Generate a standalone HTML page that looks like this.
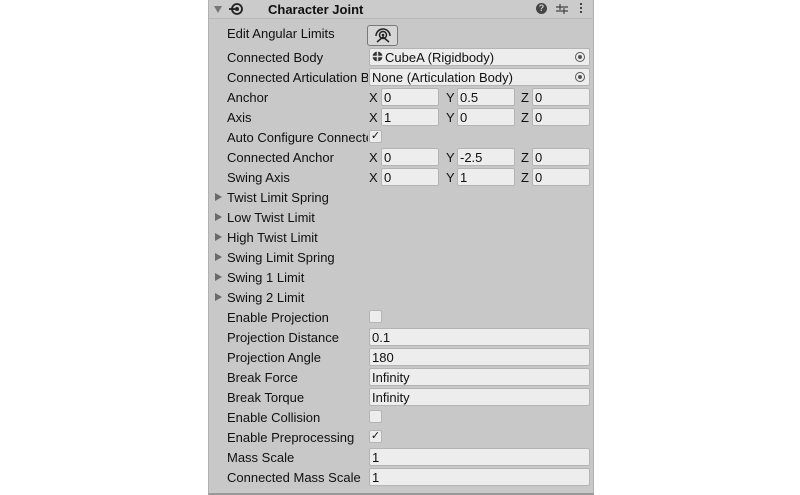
<!DOCTYPE html>
<html><head><style>
body{margin:0;width:800px;height:495px;background:#fff;position:relative;overflow:hidden;font-family:"Liberation Sans",sans-serif;font-size:13px;color:#101010}
#p{position:absolute;left:208px;top:0;width:384px;height:493px;background:#c8c8c8;border-left:1px solid #b0b0b0;border-right:1px solid #b0b0b0;border-bottom:2px solid #999}
.a{position:absolute}
.l{position:absolute;left:227px;white-space:nowrap;width:141px;overflow:hidden}
.f{position:absolute;background:#ededed;border:1px solid #b4b4b4;border-radius:2px;box-sizing:border-box;height:18px;line-height:17px;padding-left:2px;white-space:nowrap;overflow:hidden}
.x{position:absolute}
.cb{position:absolute;left:369px;width:13px;height:13px;background:#ededed;border:1px solid #b4b4b4;border-radius:2px;box-sizing:border-box;font-size:11px;line-height:11px;text-align:center}
.tri{position:absolute;left:215px;width:0;height:0;border-top:4px solid transparent;border-bottom:4px solid transparent;border-left:7px solid #6a6a6a}
.dot{position:absolute;right:4px;top:3px;width:10px;height:10px;border:1px solid #555;border-radius:50%;box-sizing:border-box}
.dot:after{content:"";position:absolute;left:2px;top:2px;width:4px;height:4px;background:#555;border-radius:50%}
</style></head><body>
<div id="p"></div>
<div class="a" style="left:209px;top:0;width:383px;height:18px;background:#cbcbcb;border-bottom:1px solid #b8b8b8"></div>
<div class="a" style="left:214px;top:6px;border-left:4px solid transparent;border-right:4px solid transparent;border-top:7px solid #777"></div>
<svg class="a" style="left:228px;top:2px" width="16" height="14" viewBox="0 0 16 14"><circle cx="9" cy="7" r="5" fill="none" stroke="#222" stroke-width="1.8"/><circle cx="9" cy="7" r="2" fill="#222"/><path d="M1 7h6" stroke="#222" stroke-width="1.8"/></svg>
<div class="a" style="left:268px;top:2px;font-weight:bold;font-size:13px">Character Joint</div>
<div class="a" style="left:536px;top:3px;width:11px;height:11px;border-radius:50%;background:#444;color:#ccc;font-size:9px;line-height:11px;text-align:center;font-weight:bold">?</div>
<svg class="a" style="left:556px;top:3px" width="12" height="12"><path d="M0 4h12M0 8h12M4 1v6M8 5v6" stroke="#444" stroke-width="1.2"/></svg>
<div class="a" style="left:580px;top:3px;width:2px;height:2px;background:#444;box-shadow:0 4px #444,0 8px #444"></div>

<div class="l" style="top:26px">Edit Angular Limits</div>
<div class="a" style="left:367px;top:25px;width:31px;height:21px;box-sizing:border-box;border:1px solid #777;border-radius:3px;background:#d6d6d6"></div>
<svg class="a" style="left:373px;top:27px" width="20" height="17" viewBox="0 0 20 17"><path d="M3 9a7 7 0 0 1 14 0" fill="none" stroke="#222" stroke-width="1.5"/><circle cx="10" cy="8" r="3.5" fill="none" stroke="#222" stroke-width="1.5"/><circle cx="10" cy="8" r="1.3" fill="#222"/><path d="M4 15l6-5 6 5" fill="none" stroke="#222" stroke-width="1.5"/></svg>

<div class="l" style="top:50px">Connected Body</div>
<div class="f" style="left:369px;top:48px;width:221px;padding-left:15px">CubeA (Rigidbody)<span class="dot"></span></div>
<svg class="a" style="left:372px;top:51px" width="11" height="11"><circle cx="5.5" cy="5.5" r="5" fill="#333"/><path d="M5.5 .5v10M.5 5.5h10" stroke="#ddd" stroke-width="1.5"/></svg>
<div class="l" style="top:70px">Connected Articulation Body</div>
<div class="f" style="left:369px;top:68px;width:221px">None (Articulation Body)<span class="dot"></span></div>

<div class="l" style="top:90px">Anchor</div>
<div class="x" style="left:369px;top:90px">X</div><div class="f" style="left:381px;top:88px;width:58px">0</div>
<div class="x" style="left:446px;top:90px">Y</div><div class="f" style="left:457px;top:88px;width:58px">0.5</div>
<div class="x" style="left:521px;top:90px">Z</div><div class="f" style="left:532px;top:88px;width:58px">0</div>
<div class="l" style="top:110px">Axis</div>
<div class="x" style="left:369px;top:110px">X</div><div class="f" style="left:381px;top:108px;width:58px">1</div>
<div class="x" style="left:446px;top:110px">Y</div><div class="f" style="left:457px;top:108px;width:58px">0</div>
<div class="x" style="left:521px;top:110px">Z</div><div class="f" style="left:532px;top:108px;width:58px">0</div>
<div class="l" style="top:130px">Auto Configure Connected Anchor</div>
<div class="cb" style="top:130px">✓</div>
<div class="l" style="top:150px">Connected Anchor</div>
<div class="x" style="left:369px;top:150px">X</div><div class="f" style="left:381px;top:148px;width:58px">0</div>
<div class="x" style="left:446px;top:150px">Y</div><div class="f" style="left:457px;top:148px;width:58px">-2.5</div>
<div class="x" style="left:521px;top:150px">Z</div><div class="f" style="left:532px;top:148px;width:58px">0</div>
<div class="l" style="top:170px">Swing Axis</div>
<div class="x" style="left:369px;top:170px">X</div><div class="f" style="left:381px;top:168px;width:58px">0</div>
<div class="x" style="left:446px;top:170px">Y</div><div class="f" style="left:457px;top:168px;width:58px">1</div>
<div class="x" style="left:521px;top:170px">Z</div><div class="f" style="left:532px;top:168px;width:58px">0</div>

<div class="tri" style="top:193px"></div><div class="l" style="top:190px">Twist Limit Spring</div>
<div class="tri" style="top:213px"></div><div class="l" style="top:210px">Low Twist Limit</div>
<div class="tri" style="top:233px"></div><div class="l" style="top:230px">High Twist Limit</div>
<div class="tri" style="top:253px"></div><div class="l" style="top:250px">Swing Limit Spring</div>
<div class="tri" style="top:273px"></div><div class="l" style="top:270px">Swing 1 Limit</div>
<div class="tri" style="top:293px"></div><div class="l" style="top:290px">Swing 2 Limit</div>

<div class="l" style="top:310px">Enable Projection</div><div class="cb" style="top:310px"></div>
<div class="l" style="top:330px">Projection Distance</div><div class="f" style="left:369px;top:328px;width:221px">0.1</div>
<div class="l" style="top:350px">Projection Angle</div><div class="f" style="left:369px;top:348px;width:221px">180</div>
<div class="l" style="top:370px">Break Force</div><div class="f" style="left:369px;top:368px;width:221px">Infinity</div>
<div class="l" style="top:390px">Break Torque</div><div class="f" style="left:369px;top:388px;width:221px">Infinity</div>
<div class="l" style="top:410px">Enable Collision</div><div class="cb" style="top:410px"></div>
<div class="l" style="top:430px">Enable Preprocessing</div><div class="cb" style="top:430px">✓</div>
<div class="l" style="top:450px">Mass Scale</div><div class="f" style="left:369px;top:448px;width:221px">1</div>
<div class="l" style="top:470px">Connected Mass Scale</div><div class="f" style="left:369px;top:468px;width:221px">1</div>
</body></html>
